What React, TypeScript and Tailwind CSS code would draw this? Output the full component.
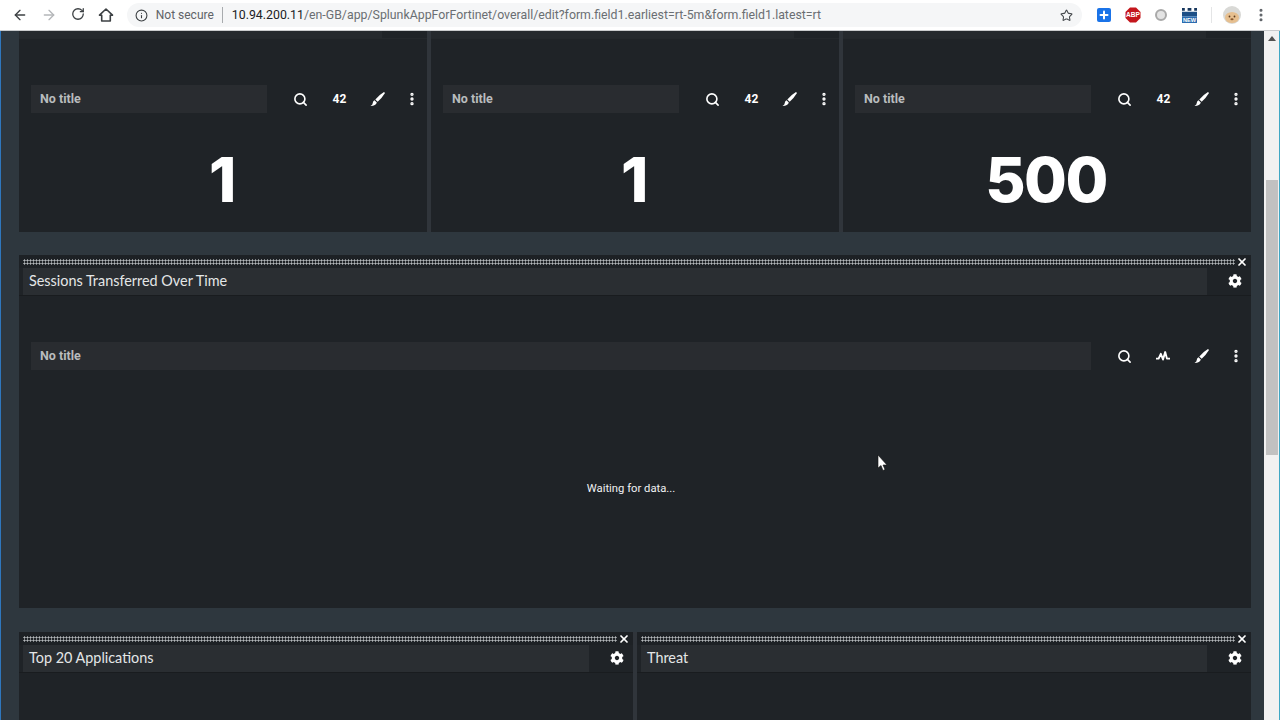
import { ArrowLeft, ArrowRight, RotateCw, Info, Star, Search, X, EllipsisVertical, Plus } from 'lucide-react';
import { FaCog } from 'react-icons/fa';

const Brush = () => (
  <svg viewBox="0 0 16 16" className="w-[16px] h-[16px] mr-[3px]" fill="#fff">
    <path d="M15 1 L16 2 Q13 7 8.7 10.7 L6.3 8.4 Q10 4 15 1Z" />
    <path d="M5.5 9.3 L7.8 11.6 Q7 15 1.5 15 Q4 13.5 3.8 11.8 Q4 10 5.5 9.3Z" />
  </svg>
);

const Pulse = () => (
  <svg viewBox="0 0 16 12" className="w-[14px] h-[12px] mr-[1px]" fill="none" stroke="#fff" strokeWidth="2.2" strokeLinejoin="round">
    <path d="M0 9 L3 9 L5.5 3.5 L8 10 L10.5 1.5 L12.5 9 L16 9" />
  </svg>
);

const Dots = () => (
  <div className="flex-1 h-[6px] bg-[radial-gradient(circle,#b4b8bb_0.95px,transparent_1.1px)] bg-[length:3px_3px]" />
);

function PanelHeader({ badge }: { badge: 'count' | 'pulse' }) {
  return (
    <div className="flex items-center font-['Roboto',sans-serif]">
      <div className="flex-1 ml-[12px] h-[28px] pl-[9px] flex items-center bg-[#292c30] text-[12.5px] font-bold text-[#b9bcbe]">
        No title
      </div>
      <div className="w-[160px] pl-[14px] flex items-center text-white">
        <div className="w-[39px] flex justify-center">
          <Search className="w-[15px] h-[15px] mr-[1px]" strokeWidth={2.6} />
        </div>
        <div className="w-[39px] flex justify-center text-[12px] font-bold">
          {badge === 'count' ? '42' : <Pulse />}
        </div>
        <div className="w-[39px] flex justify-center">
          <Brush />
        </div>
        <div className="w-[27px] flex justify-center">
          <EllipsisVertical className="w-[16px] h-[16px]" strokeWidth={3} />
        </div>
      </div>
    </div>
  );
}

function SingleValue({ value }: { value: string }) {
  return (
    <div className="bg-[#1f2327] flex flex-col h-[201px]">
      <div className="h-[8px] border-b border-[#24282c] shrink-0">
        <div className="w-[363px] h-[7px] bg-[#25292d]" />
      </div>
      <div className="mt-[46px]">
        <PanelHeader badge="count" />
      </div>
      <div className="flex-1 flex items-center justify-center pt-[15px] pr-[2px] text-white text-[62px] leading-none font-extrabold font-['Inter',sans-serif] tracking-[-1.5px]">
        {value}
      </div>
    </div>
  );
}

function TitledPanel({ title, children }: { title: string; children?: React.ReactNode }) {
  return (
    <div className="bg-[#1f2327] flex flex-col h-full">
      <div className="h-[13px] shrink-0 flex items-center pl-[4px] pr-[3px] bg-[#1d2125]">
        <Dots />
        <X className="w-[12px] h-[12px] ml-[1px] text-white" strokeWidth={3.5} />
      </div>
      <div className="h-[28px] shrink-0 flex items-center border-b border-[#191c1f]">
        <div className="flex-1 ml-[4px] h-full pl-[6px] pb-[1px] flex items-center bg-[#2a2e32] text-[14.4px] text-[#e4e6e7]">
          {title}
        </div>
        <div className="w-[44px] pl-[12px] pb-[2px] flex justify-center">
          <FaCog className="w-[14px] h-[14px] text-white" />
        </div>
      </div>
      {children}
    </div>
  );
}

export default function App() {
  return (
    <div className="relative w-[1280px] h-[720px] overflow-hidden flex flex-col bg-white font-['Lato','Noto_Sans',sans-serif]">
      {/* browser toolbar */}
      <div className="h-[31px] shrink-0 flex items-center bg-white border-b border-[#c9cbcd] font-['Roboto',sans-serif] text-[#5f6368]">
        <div className="flex ml-[6px]">
          <div className="w-[28.7px] flex justify-center"><ArrowLeft className="w-[16px] h-[16px] text-[#3c4043]" strokeWidth={2} /></div>
          <div className="w-[28.7px] flex justify-center"><ArrowRight className="w-[16px] h-[16px] text-[#b4b6b9]" strokeWidth={2} /></div>
          <div className="w-[28.7px] flex justify-center"><RotateCw className="w-[14px] h-[14px] text-[#3c4043]" strokeWidth={2.2} /></div>
          <div className="w-[28.7px] flex justify-center">
            <svg viewBox="0 0 16 16" className="w-[16px] h-[16px]" fill="none" stroke="#3c4043" strokeWidth="1.6" strokeLinejoin="round">
              <path d="M8 2 L14.5 8.2 L12.3 8.2 L12.3 14 L3.7 14 L3.7 8.2 L1.5 8.2Z" />
            </svg>
          </div>
        </div>
        <div className="ml-[6px] w-[955px] h-[24px] rounded-full bg-[#f5f6f7] flex items-center pl-[8px] pr-[8px]">
          <Info className="w-[13px] h-[13px] text-[#3c4043]" strokeWidth={2} />
          <span className="ml-[8px] text-[12px] text-[#5f6368]">Not secure</span>
          <span className="ml-[8px] w-px h-[16px] bg-[#a8abae]" />
          <span className="ml-[9px] text-[12.33px] whitespace-nowrap text-[#6a6e72]">
            <span className="text-[#202124]">10.94.200.11</span>/en-GB/app/SplunkAppForFortinet/overall/edit?form.field1.earliest=rt-5m&amp;form.field1.latest=rt
          </span>
          <Star className="ml-auto mr-[1px] w-[13px] h-[13px] text-[#45494d]" strokeWidth={2} />
        </div>
        <div className="ml-[8px] flex items-center">
          <div className="w-[28.5px] flex justify-center">
            <div className="w-[14px] h-[14px] rounded-[2px] bg-[#1a73e8] flex items-center justify-center">
              <Plus className="w-[12px] h-[12px] text-white" strokeWidth={4} />
            </div>
          </div>
          <div className="w-[28.5px] flex justify-center">
            <svg viewBox="0 0 16 16" className="w-[16px] h-[16px]">
              <polygon points="5,0.5 11,0.5 15.5,5 15.5,11 11,15.5 5,15.5 0.5,11 0.5,5" fill="#c4161c" />
              <text x="8" y="10.4" textAnchor="middle" fontSize="6.6" fontWeight="700" fill="#fff" fontFamily="Liberation Sans">ABP</text>
            </svg>
          </div>
          <div className="w-[28.5px] flex justify-center">
            <div className="w-[12px] h-[12px] rounded-full bg-[#e3e3e3] border-[2px] border-[#a9a9a9]" />
          </div>
          <div className="w-[28.5px] flex justify-center">
            <svg viewBox="0 0 16 16" className="w-[15px] h-[15px]">
              <rect width="16" height="16" fill="#fff" />
              <path d="M0 0 H3 V3 H6 V0 H10 V3 H13 V0 H16 V3 H0Z" fill="#17375e" />
              <rect y="4" width="16" height="5" fill="#1d4f86" />
              <rect y="9" width="16" height="7" fill="#2b6cb0" />
              <text x="8" y="15" textAnchor="middle" fontSize="6" fontWeight="700" fill="#fff" fontFamily="Liberation Sans">NEW</text>
            </svg>
          </div>
          <span className="ml-[7px] w-px h-[16px] bg-[#e4e5e6]" />
          <svg viewBox="0 0 18 18" className="ml-[11px] w-[18px] h-[18px]">
            <circle cx="9" cy="9" r="9" fill="#d9d9d6" />
            <ellipse cx="9" cy="11.5" rx="7" ry="5.5" fill="#e6bf8f" />
            <circle cx="6.5" cy="10.5" r="0.9" fill="#5b3a1e" />
            <circle cx="11.5" cy="10.5" r="0.9" fill="#5b3a1e" />
            <ellipse cx="9" cy="13.3" rx="1.6" ry="1" fill="#8a5a30" />
          </svg>
          <EllipsisVertical className="ml-[12px] w-[16px] h-[16px] text-[#5f6368]" strokeWidth={2.6} />
        </div>
      </div>

      <div className="flex-1 min-h-0 flex">
        {/* dashboard */}
        <div className="w-[1264px] shrink-0 border-l border-[#2f77bd] bg-[#2e373e] pl-[18px] pr-[13px] overflow-hidden">
          <div className="grid grid-cols-3 gap-[4px] bg-[#30353b]">
            <SingleValue value="1" />
            <SingleValue value="1" />
            <SingleValue value="500" />
          </div>

          <div className="mt-[23px] h-[353px]">
            <TitledPanel title="Sessions Transferred Over Time">
              <div className="mt-[46px]">
                <PanelHeader badge="pulse" />
              </div>
              <div className="flex-1 flex items-center justify-center pr-[8px] text-[11.25px] text-[#f0f1f2] font-['Roboto',sans-serif]">
                Waiting for data...
              </div>
            </TitledPanel>
          </div>

          <div className="mt-[24px] h-[88px] grid grid-cols-2 gap-[4px] bg-[#30353b]">
            <TitledPanel title="Top 20 Applications" />
            <TitledPanel title="Threat" />
          </div>
        </div>

        {/* page scrollbar */}
        <div className="flex-1 bg-[#f1f1f1] border-r border-[#3fa7c4] flex flex-col items-center pt-[5px]">
          <div className="w-0 h-0 border-x-[4px] border-x-transparent border-b-[5px] border-b-[#505050]" />
          <div className="mt-[139px] w-[12px] h-[275px] bg-[#c1c1c1]" />
        </div>
      </div>

      {/* mouse pointer */}
      <svg viewBox="0 0 12 18" className="absolute left-[877px] top-[454px] w-[12px] h-[18px]">
        <path d="M1 1 L1 14 L4 11.5 L6 16.5 L8 15.5 L6 11 L10 11Z" fill="#fff" stroke="#111" strokeWidth="0.6" />
      </svg>
    </div>
  );
}
